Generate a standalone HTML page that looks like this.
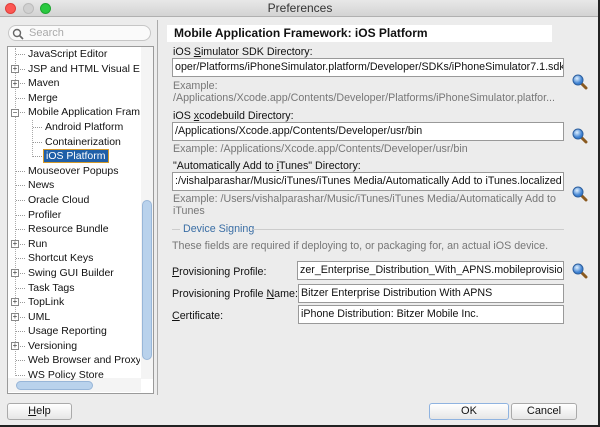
<!DOCTYPE html>
<html><head><style>
*{margin:0;padding:0;box-sizing:border-box}
body{width:600px;height:427px;overflow:hidden;background:#ececec;font-family:"Liberation Sans",sans-serif;font-size:10.7px;color:#111;position:relative}
.a{position:absolute;white-space:nowrap}
.tb{left:0;top:0;width:600px;height:17px;background:linear-gradient(#e8e8e8,#d3d3d3);border-bottom:1px solid #b0b0b0;text-align:center;font-size:12px;line-height:17px;color:#333}
.dot{width:11px;height:11px;border-radius:50%;top:3px}
.f{background:#fff;border:1px solid #999;height:19px;line-height:17px;padding-left:2px;overflow:hidden}
.g{color:#777}
.tr{font-size:10.5px}
.tr div{position:relative}
.tr .r::before{content:"";position:absolute;left:6px;top:7px;width:9px;border-top:1px dotted #999}
.tr .s::before{content:"";position:absolute;left:23px;top:7px;width:9px;border-top:1px dotted #999}
.pm{width:8px;height:8px;border:1px solid #888;background:#fff;font-size:8px;line-height:6px;text-align:center;color:#333}
.btn{height:17px;border:1px solid #aaa;border-radius:3px;background:linear-gradient(#fff,#e6e6e6);text-align:center;line-height:15px;font-size:11px}
</style></head><body>
<div class="a tb">Preferences</div>
<div class="a dot" style="left:5px;background:#fc5753;border:1px solid #de3f3a"></div>
<div class="a dot" style="left:23px;background:#d0d0d0;border:1px solid #bbb"></div>
<div class="a dot" style="left:40px;background:#2ac940;border:1px solid #1fa531"></div>
<div class="a" style="right:0;top:0;width:2px;height:427px;background:#222"></div>
<div class="a" style="left:0;bottom:0;width:600px;height:2px;background:#222"></div>

<div class="a" style="left:8px;top:25px;width:143px;height:16px;border:1px solid #c6c6c6;border-radius:8px;background:#fafafa"></div>
<svg class="a" style="left:12px;top:28px" width="12" height="12"><circle cx="5" cy="5" r="3.5" fill="none" stroke="#666" stroke-width="1.4"/><line x1="7.5" y1="7.5" x2="11" y2="11" stroke="#666" stroke-width="1.6"/></svg>
<div class="a" style="left:29px;top:27px;color:#aaa;font-size:11px">Search</div>

<div class="a" style="left:7px;top:46px;width:147px;height:348px;background:#fff;border:1px solid #9a9a9a"></div>
<div class="a" style="left:141px;top:47px;width:12px;height:332px;background:#f4f4f4"></div>
<div class="a" style="left:142px;top:200px;width:10px;height:160px;background:#b9d2ec;border:1px solid #98b6d8;border-radius:5px"></div>
<div class="a" style="left:8px;top:378px;width:133px;height:14px;background:#f4f4f4"></div>
<div class="a" style="left:16px;top:381px;width:77px;height:9px;background:#b9d2ec;border:1px solid #98b6d8;border-radius:5px"></div>
<div class="a" style="left:15px;top:48px;height:328px;border-left:1px dotted #aaa"></div>
<div class="a" style="left:32px;top:120px;height:37px;border-left:1px dotted #aaa"></div>

<div class="a tr" style="left:10px;top:47px;line-height:14.6px;width:130px;overflow:hidden">
<div class="r" style="padding-left:18px">JavaScript Editor</div>
<div class="r" style="padding-left:18px">JSP and HTML Visual Edit</div>
<div class="r" style="padding-left:18px">Maven</div>
<div class="r" style="padding-left:18px">Merge</div>
<div class="r" style="padding-left:18px">Mobile Application Fram</div>
<div class="s" style="padding-left:35px">Android Platform</div>
<div class="s" style="padding-left:35px">Containerization</div>
<div class="s" style="padding-left:33px"><span style="background:#1f5fa8;color:#fff;border:1px solid #d59a2a;padding:0 2px">iOS Platform</span></div>
<div class="r" style="padding-left:18px">Mouseover Popups</div>
<div class="r" style="padding-left:18px">News</div>
<div class="r" style="padding-left:18px">Oracle Cloud</div>
<div class="r" style="padding-left:18px">Profiler</div>
<div class="r" style="padding-left:18px">Resource Bundle</div>
<div class="r" style="padding-left:18px">Run</div>
<div class="r" style="padding-left:18px">Shortcut Keys</div>
<div class="r" style="padding-left:18px">Swing GUI Builder</div>
<div class="r" style="padding-left:18px">Task Tags</div>
<div class="r" style="padding-left:18px">TopLink</div>
<div class="r" style="padding-left:18px">UML</div>
<div class="r" style="padding-left:18px">Usage Reporting</div>
<div class="r" style="padding-left:18px">Versioning</div>
<div class="r" style="padding-left:18px">Web Browser and Proxy</div>
<div class="r" style="padding-left:18px">WS Policy Store</div>
</div>
<div class="a pm" style="left:11px;top:65px">+</div>
<div class="a pm" style="left:11px;top:80px">+</div>
<div class="a pm" style="left:11px;top:109px">−</div>
<div class="a pm" style="left:11px;top:240px">+</div>
<div class="a pm" style="left:11px;top:269px">+</div>
<div class="a pm" style="left:11px;top:298px">+</div>
<div class="a pm" style="left:11px;top:313px">+</div>
<div class="a pm" style="left:11px;top:342px">+</div>

<div class="a" style="left:157px;top:20px;width:1px;height:375px;background:#aaa"></div>

<div class="a" style="left:167px;top:25px;width:385px;height:17px;background:#fff;font-weight:bold;font-size:12px;line-height:17px;padding-left:7px">Mobile Application Framework: iOS Platform</div>

<div class="a" style="left:173px;top:46px">iOS <u>S</u>imulator SDK Directory:</div>
<div class="a f" style="left:172px;top:58px;width:392px">oper/Platforms/iPhoneSimulator.platform/Developer/SDKs/iPhoneSimulator7.1.sdk</div>
<div class="a g" style="left:173px;top:80px">Example:</div>
<div class="a g" style="left:173px;top:92px">/Applications/Xcode.app/Contents/Developer/Platforms/iPhoneSimulator.platfor...</div>
<div class="a" style="left:173px;top:110px">iOS <u>x</u>codebuild Directory:</div>
<div class="a f" style="left:172px;top:122px;width:392px">/Applications/Xcode.app/Contents/Developer/usr/bin</div>
<div class="a g" style="left:173px;top:143px">Example: /Applications/Xcode.app/Contents/Developer/usr/bin</div>
<div class="a" style="left:173px;top:160px">"Automatically Add to <u>i</u>Tunes" Directory:</div>
<div class="a f" style="left:172px;top:172px;width:392px">:/vishalparashar/Music/iTunes/iTunes Media/Automatically Add to iTunes.localized</div>
<div class="a g" style="left:173px;top:193px">Example: /Users/vishalparashar/Music/iTunes/iTunes Media/Automatically Add to</div>
<div class="a g" style="left:173px;top:205px">iTunes</div>

<div class="a" style="left:172px;top:229px;width:8px;border-top:1px solid #ccc"></div>
<div class="a" style="left:183px;top:223px;color:#3a6ea5">Device Signing</div>
<div class="a" style="left:253px;top:229px;width:311px;border-top:1px solid #ccc"></div>
<div class="a g" style="left:172px;top:240px">These fields are required if deploying to, or packaging for, an actual iOS device.</div>

<div class="a" style="left:172px;top:266px"><u>P</u>rovisioning Profile:</div>
<div class="a f" style="left:297px;top:261px;width:267px">zer_Enterprise_Distribution_With_APNS.mobileprovision</div>
<div class="a" style="left:172px;top:288px">Provisioning Profile <u>N</u>ame:</div>
<div class="a f" style="left:298px;top:284px;width:266px">Bitzer Enterprise Distribution With APNS</div>
<div class="a" style="left:172px;top:310px"><u>C</u>ertificate:</div>
<div class="a f" style="left:298px;top:305px;width:266px">iPhone Distribution: Bitzer Mobile Inc.</div>

<svg width="0" height="0" style="position:absolute"><defs><radialGradient id="lg" cx="40%" cy="35%"><stop offset="0" stop-color="#dff0ff"/><stop offset="1" stop-color="#3b7fd0"/></radialGradient></defs></svg>
<svg class="a" style="left:572px;top:74px" width="16" height="16"><line x1="9" y1="9" x2="14" y2="14" stroke="#8a5a20" stroke-width="3" stroke-linecap="round"/><circle cx="6" cy="6" r="5" fill="url(#lg)" stroke="#2d5f9e"/></svg>
<svg class="a" style="left:572px;top:128px" width="16" height="16"><line x1="9" y1="9" x2="14" y2="14" stroke="#8a5a20" stroke-width="3" stroke-linecap="round"/><circle cx="6" cy="6" r="5" fill="url(#lg)" stroke="#2d5f9e"/></svg>
<svg class="a" style="left:572px;top:186px" width="16" height="16"><line x1="9" y1="9" x2="14" y2="14" stroke="#8a5a20" stroke-width="3" stroke-linecap="round"/><circle cx="6" cy="6" r="5" fill="url(#lg)" stroke="#2d5f9e"/></svg>
<svg class="a" style="left:572px;top:263px" width="16" height="16"><line x1="9" y1="9" x2="14" y2="14" stroke="#8a5a20" stroke-width="3" stroke-linecap="round"/><circle cx="6" cy="6" r="5" fill="url(#lg)" stroke="#2d5f9e"/></svg>

<div class="a btn" style="left:7px;top:403px;width:65px"><u>H</u>elp</div>
<div class="a btn" style="left:429px;top:403px;width:80px;border-color:#8fb3e0">OK</div>
<div class="a btn" style="left:511px;top:403px;width:66px">Cancel</div>
</body></html>
